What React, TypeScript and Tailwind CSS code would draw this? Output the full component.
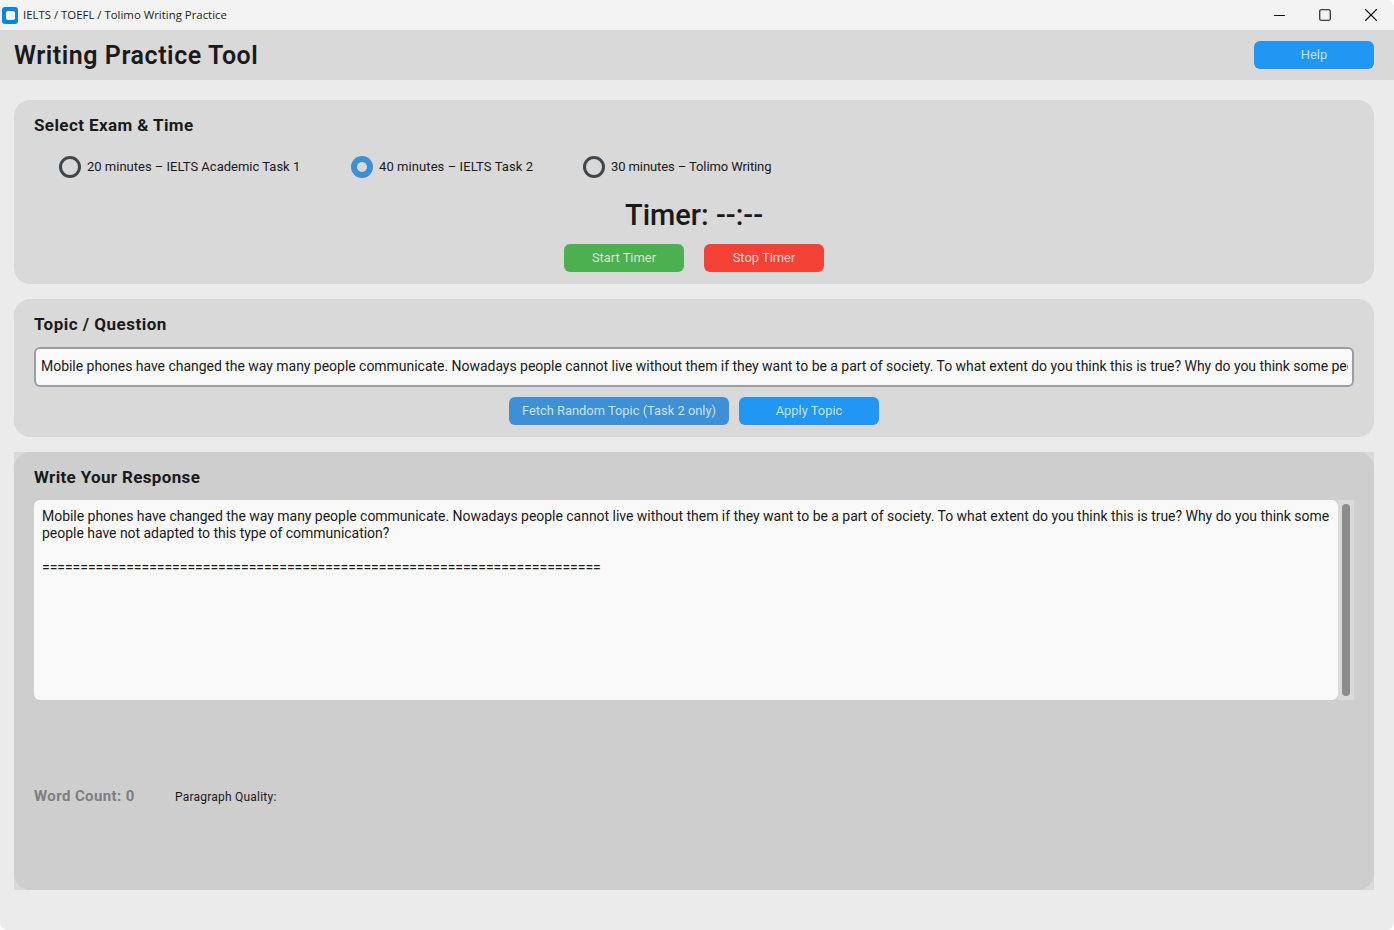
import { Minus, Square, X } from "lucide-react";

const topic =
  "Mobile phones have changed the way many people communicate. Nowadays people cannot live without them if they want to be a part of society. To what extent do you think this is true? Why do you think some people have not adapted to this type of communication?";

const radioOptions = [
  { label: "20 minutes – IELTS Academic Task 1", checked: false, className: "w-[292px]" },
  { label: "40 minutes – IELTS Task 2", checked: true, className: "w-[232px] tracking-[0.08px]" },
  { label: "30 minutes – Tolimo Writing", checked: false, className: "tracking-[-0.1px]" }
];

function Radio({ label, checked, className }: { label: string; checked: boolean; className: string }) {
  return (
    <div className={`flex items-center gap-[6px] ${className}`}>
      {checked ? (
        <span className="flex h-[22px] w-[22px] items-center justify-center rounded-full bg-[#3d8fd6]">
          <span className="h-[10px] w-[10px] rounded-full bg-[#d9d9d9]" />
        </span>
      ) : (
        <span className="h-[22px] w-[22px] rounded-full border-[3px] border-[#41464b]" />
      )}
      <span className="pb-[2px] text-[13px] leading-none text-[#1a1a1a]">{label}</span>
    </div>
  );
}

function ActionButton({ label, className }: { label: string; className: string }) {
  return (
    <button
      type="button"
      className={`flex h-[28px] items-center justify-center rounded-[6px] text-[12.9px] leading-none text-white/75 ${className}`}
    >
      {label}
    </button>
  );
}

export default function App() {
  return (
    <div className="relative flex h-[930px] w-[1394px] flex-col overflow-hidden rounded-[8px] bg-[#ebebeb] font-['Roboto',sans-serif]">
      <div className="flex h-[30px] shrink-0 items-center bg-[#f3f3f3] pl-[2px]">
        <span className="flex h-[17px] w-[16px] items-center justify-center rounded-[3px] bg-[#0a84e8]">
          <span className="h-[9px] w-[9px] rounded-[2px] bg-white" />
        </span>
        <span className="ml-[5px] pb-[1px] font-['Open_Sans',sans-serif] text-[11.4px] text-[#1c1c1c]">
          IELTS / TOEFL / Tolimo Writing Practice
        </span>
        <div className="ml-auto flex items-center text-[#111111]">
          <span className="flex w-[46px] justify-center">
            <Minus size={17} strokeWidth={1.6} />
          </span>
          <span className="flex w-[46px] justify-center">
            <Square size={14} strokeWidth={1.9} />
          </span>
          <span className="flex w-[46px] justify-center">
            <X size={22} strokeWidth={1.2} />
          </span>
        </div>
      </div>

      <header className="flex h-[50px] shrink-0 items-center justify-between bg-[#d9d9d9] pl-[14px] pr-[20px]">
        <h1 className="text-[25px] font-semibold leading-none tracking-[0.55px] text-[#1a1a1a]">
          Writing Practice Tool
        </h1>
        <ActionButton label="Help" className="w-[120px] bg-[#2196f3]" />
      </header>

      <main className="flex flex-col gap-[15px] pl-[14px] pr-[20px] pt-[20px]">
        <section className="flex h-[184px] flex-col rounded-[16px] bg-[#d9d9d9] px-[20px] pt-[15px]">
          <h2 className="text-[17px] font-bold leading-[20px] tracking-[0.4px] text-[#1a1a1a]">
            Select Exam &amp; Time
          </h2>
          <div className="mt-[21px] flex pl-[25px]">
            {radioOptions.map((option) => (
              <Radio key={option.label} {...option} />
            ))}
          </div>
          <div className="mt-[19px] text-center text-[29px] font-medium leading-[36px] text-[#1a1a1a]">
            Timer: --:--
          </div>
          <div className="mt-[11px] flex justify-center gap-[20px]">
            <ActionButton label="Start Timer" className="w-[120px] bg-[#4caf50]" />
            <ActionButton label="Stop Timer" className="w-[120px] bg-[#f44336]" />
          </div>
        </section>

        <section className="flex h-[138px] flex-col rounded-[16px] bg-[#d9d9d9] px-[20px] pt-[15px]">
          <h2 className="text-[17px] font-bold leading-[20px] tracking-[0.5px] text-[#1a1a1a]">Topic / Question</h2>
          <div className="mt-[13px] flex h-[40px] items-center rounded-[6px] border-2 border-[#9a9da3] bg-[#f9f9f9] pb-[2px] pl-[5px] pr-[4px]">
            <div className="overflow-hidden whitespace-nowrap text-[14px] tracking-[-0.03px] text-[#1a1a1a]">{topic}</div>
          </div>
          <div className="mt-[10px] flex justify-center gap-[10px]">
            <ActionButton label="Fetch Random Topic (Task 2 only)" className="w-[220px] bg-[#3d8fd6]" />
            <ActionButton label="Apply Topic" className="w-[140px] bg-[#2196f3]" />
          </div>
        </section>

        <div className="bg-[#d9d9d9]">
          <section className="flex h-[438px] flex-col rounded-[16px] bg-[#cecece] px-[20px] pt-[15px]">
            <h2 className="text-[17px] font-bold leading-[20px] tracking-[0.35px] text-[#1a1a1a]">Write Your Response</h2>
            <div className="mt-[13px] flex h-[200px]">
              <div className="w-[1304px] rounded-[6px] bg-[#f9f9f9] px-[8px] pt-[8px] text-[14px] leading-[17px] tracking-[-0.03px] text-[#1a1a1a]">
                <p>{topic}</p>
                <p className="mt-[17px] whitespace-nowrap">
                  =========================================================================
                </p>
              </div>
              <div className="flex w-[16px] justify-center bg-[#d9d9d9] py-[4px]">
                <div className="w-[8px] rounded-full bg-[#8c8c8c]" />
              </div>
            </div>
            <div className="mt-[89px] flex items-center">
              <span className="w-[141px] text-[15px] font-bold leading-none tracking-[0.4px] text-[#7f7f7f]">
                Word Count: 0
              </span>
              <span className="text-[12px] leading-none tracking-[0.22px] text-[#1a1a1a]">Paragraph Quality:</span>
            </div>
          </section>
        </div>
      </main>
    </div>
  );
}
